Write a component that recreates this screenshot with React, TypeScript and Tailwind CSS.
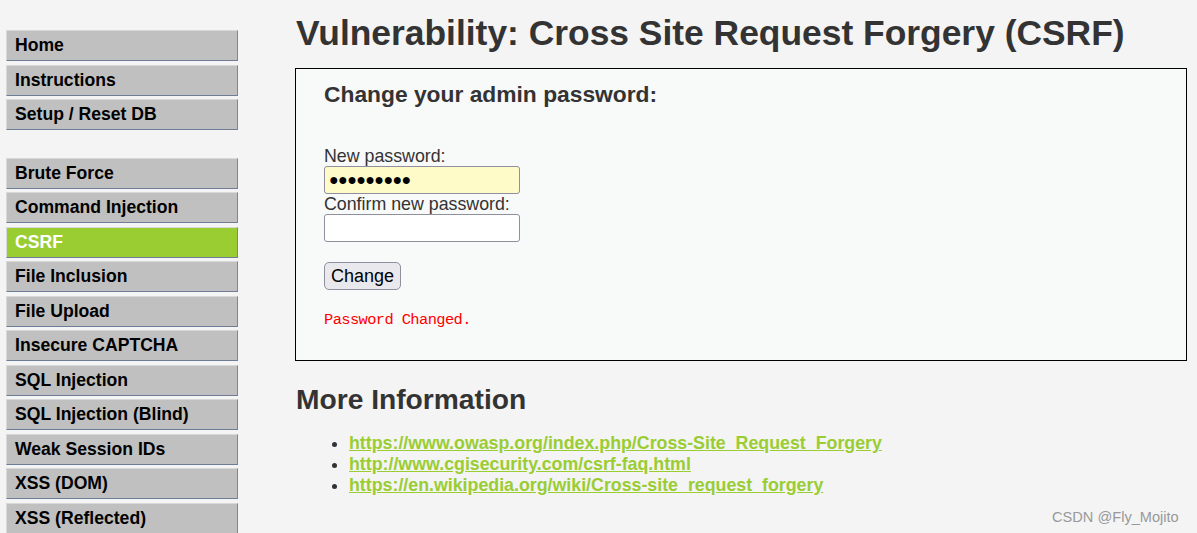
import React from "react";

const menuTop = ["Home", "Instructions", "Setup / Reset DB"];
const menuVulns = [
  "Brute Force",
  "Command Injection",
  "CSRF",
  "File Inclusion",
  "File Upload",
  "Insecure CAPTCHA",
  "SQL Injection",
  "SQL Injection (Blind)",
  "Weak Session IDs",
  "XSS (DOM)",
  "XSS (Reflected)",
];

const links = [
  "https://www.owasp.org/index.php/Cross-Site_Request_Forgery",
  "http://www.cgisecurity.com/csrf-faq.html",
  "https://en.wikipedia.org/wiki/Cross-site_request_forgery",
];

function MenuItem({ label }: { label: string }) {
  const active = label === "CSRF";
  return (
    <div
      className={`h-[31px] mb-[3.5px] flex items-center pl-[8px] text-[17.6px] font-bold border border-t-[#d8d8d8] border-l-[#d8d8d8] border-r-[#7a8699] border-b-[#6d7d96] ${
        active ? "bg-[#9acd32] text-white" : "bg-[#c0c0c0] text-black"
      }`}
    >
      {label}
    </div>
  );
}

export default function App() {
  return (
    <div className="w-[1197px] h-[533px] overflow-hidden bg-[#f4f4f4] flex font-['Liberation_Sans',Arial,sans-serif] relative">
      {/* Menu */}
      <div className="w-[232px] ml-[6px] pt-[30px] shrink-0">
        {menuTop.map((m) => (
          <MenuItem key={m} label={m} />
        ))}
        <div className="h-[24px]" />
        {menuVulns.map((m) => (
          <MenuItem key={m} label={m} />
        ))}
      </div>

      {/* Body */}
      <div className="ml-[57px] w-[892px]">
        <h1 className="text-[35.4px] font-bold text-[#333] mt-[13px] leading-[40px] ml-[1px] whitespace-nowrap">
          Vulnerability: Cross Site Request Forgery (CSRF)
        </h1>
        <div className="mt-[15px] border border-black bg-[#f8f9f9] h-[293px] pl-[28px] pt-[12px] text-[#333]">
          <h3 className="text-[22.8px] font-bold leading-[26px]">Change your admin password:</h3>
          <div className="mt-[40px] text-[17.8px] leading-[19px]">New password:</div>
          <div className="w-[196px] h-[28px] bg-[#fffbc8] border border-[#8f8f9d] rounded-[3px] flex items-center pl-[4px] text-black text-[16px] tracking-[-0.6px]">
            ●●●●●●●●●
          </div>
          <div className="text-[17.8px] leading-[19px] mt-[1px]">Confirm new password:</div>
          <div className="w-[196px] h-[28px] bg-white border border-[#8f8f9d] rounded-[3px]" />
          <div className="mt-[20px] w-[77px] h-[28px] bg-[#e9e9ed] border border-[#8f8f9d] rounded-[5px] flex items-center justify-center text-[18px] text-black">
            Change
          </div>
          <div className="mt-[20px] text-[15.4px] tracking-[-0.6px] text-[#ff0000] font-['Liberation_Mono','Courier_New',monospace] leading-[20px]">
            Password Changed.
          </div>
        </div>

        <h2 className="mt-[22px] text-[28.2px] font-bold text-[#333] leading-[32px] ml-[1px]">More Information</h2>
        <ul className="mt-[18px] ml-[54px] list-disc text-[17.8px] font-bold leading-[21px] text-[#333]">
          {links.map((l) => (
            <li key={l}>
              <span className="text-[#9acd32] underline">{l}</span>
            </li>
          ))}
        </ul>
      </div>

      <div className="absolute left-[1052px] top-[507px] text-[14.6px] text-[#999]">CSDN @Fly_Mojito</div>
    </div>
  );
}
